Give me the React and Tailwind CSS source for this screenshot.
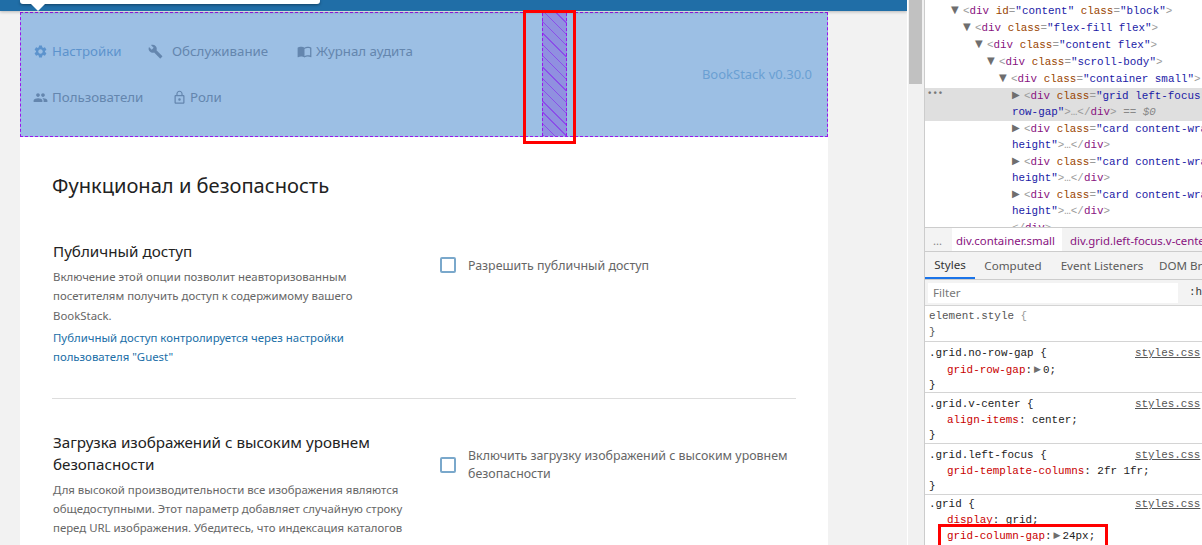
import React from "react";
import { MdSettings, MdBuild, MdImportContacts, MdPeople, MdLockOutline } from "react-icons/md";

const NavItem = ({ icon: Icon, label, w, gap, tone }) => (
  <div className={`flex items-center ${w} ${gap} ${tone} py-[13.5px] leading-[19px]`}>
    <Icon className="w-[15px] h-[15px] shrink-0" />
    <span>{label}</span>
  </div>
);

const T = ({ children }) => <span className="text-[#881280]">{children}</span>;
const A = ({ children }) => <span className="text-[#994500]">{children}</span>;
const V = ({ children }) => <span className="text-[#1a1aa6]">{children}</span>;
const P = ({ children }) => <span className="text-[#9a9a9a]">{children}</span>;
const Arrow = ({ open }) => (
  <span className="inline-block w-[12px] text-[#6e6e6e] text-[10px] leading-none align-[1px]" style={{ fontFamily: '"DejaVu Sans", sans-serif' }}>{open ? "▼" : "▶"}</span>
);

const DomLine = ({ pad, open, tag, attrs }) => (
  <div className={`${pad} h-[17px] leading-[17px] whitespace-nowrap`}>
    <Arrow open={open} />
    <P>&lt;</P><T>{tag}</T>
    {attrs.map(([k, v]) => (
      <span key={k}> <A>{k}</A><P>=</P><V>"{v}"</V></span>
    ))}
    <P>&gt;</P>
  </div>
);

const CardLine = () => (
  <div className="h-[33px]">
    <div className="pl-[87px] whitespace-nowrap leading-[16px]">
      <Arrow /><P>&lt;</P><T>div</T> <A>class</A><P>=</P><V>"card content-wra</V>
    </div>
    <div className="pl-[87px] whitespace-nowrap leading-[17px]">
      <V>height"</V><P>&gt;…&lt;/</P><T>div</T><P>&gt;</P>
    </div>
  </div>
);

const Rule = ({ sel, children }) => (
  <div className="border-b border-[#d4d4d4] pl-[4px] pr-0 pt-[3px] leading-[16px] h-[51px] whitespace-nowrap overflow-hidden flex flex-col">
    <div className="flex justify-between">
      <span><span className="text-[#222]">{sel}</span> <span className="text-[#222]">{"{"}</span></span>
      <span className="underline text-[#555] w-[67px] overflow-hidden shrink-0">styles.css</span>
    </div>
    <div className="pl-[18px]">{children}</div>
    <div className="text-[#222] -mt-[1px]">{"}"}</div>
  </div>
);

const Decl = ({ k, v, arrow }) => (
  <span>
    <span className="text-[#c80000]">{k}</span>
    <span className="text-[#222]">:</span>
    {arrow ? <span className="text-[#6e6e6e] text-[9px] mx-[2px] align-[1px]" style={{ fontFamily: '"DejaVu Sans", sans-serif' }}>▶</span> : " "}
    <span className="text-[#222]">{v}</span>
    <span className="text-[#222]">;</span>
  </span>
);

export default function App() {
  return (
    <div className="relative w-[1202px] h-[545px] overflow-hidden flex bg-white" style={{ fontFamily: '"Noto Sans", sans-serif' }}>
      {/* Page */}
      <div className="w-[907px] h-[545px] overflow-hidden bg-[#f2f2f2] shrink-0">
        <div className="relative h-[11px] bg-[#206ea7] shadow-[0_1px_3px_rgba(0,0,0,0.25)] z-10">
          <div className="absolute left-[20px] top-0 w-[300px] h-[4px] bg-white rounded-b-[3px] shadow-[0_1px_3px_rgba(0,0,0,0.4)]" />
          <div className="absolute left-[31px] top-[4px] w-0 h-0 border-l-[7px] border-r-[7px] border-t-[7px] border-l-transparent border-r-transparent border-t-white" />
        </div>
        <div className="ml-[20px] w-[808px] bg-white pt-px">
          <div className="grid grid-cols-[521px_25px_1fr] h-[125px] bg-[#9cbfe4] border border-dashed border-[#9a14ee] text-[13.3px]">
            <div className="pl-[12px] py-[15px]">
              <div className="flex">
                <NavItem icon={MdSettings} label="Настройки" w="w-[115px]" gap="gap-[4px]" tone="text-[#5c93cd]" />
                <NavItem icon={MdBuild} label="Обслуживание" w="w-[149px]" gap="gap-[9px]" tone="text-[#6486ae]" />
                <NavItem icon={MdImportContacts} label="Журнал аудита" w="w-[160px]" gap="gap-[4px]" tone="text-[#6486ae]" />
              </div>
              <div className="flex">
                <NavItem icon={MdPeople} label="Пользователи" w="w-[139px]" gap="gap-[4px]" tone="text-[#6486ae]" />
                <NavItem icon={MdLockOutline} label="Роли" w="w-[80px]" gap="gap-[3px]" tone="text-[#6486ae]" />
              </div>
            </div>
            <div className="border-x border-dashed border-[#9a14ee] bg-[#9090e0] bg-[repeating-linear-gradient(45deg,#8a50e8_0,#8a50e8_1px,transparent_1px,transparent_8px)]" />
            <div className="flex items-center justify-end pr-[15px] text-[#6a9fd3] text-[13px]">BookStack v0.30.0</div>
          </div>
          <div className="px-[32px] pt-[35px] h-[409px] overflow-hidden">
            <h2 className="text-[20.1px] leading-[28px] text-[#222] font-normal">Функционал и безопасность</h2>
            <div className="grid grid-cols-2 gap-x-8 mt-[40px] border-b border-[#ddd] h-[159px]">
              <div className="pl-px">
                <div className="text-[15.2px] leading-[22px] text-[#222]">Публичный доступ</div>
                <p className="text-[11.4px] leading-[19.3px] text-[#666] mt-[5px] whitespace-nowrap">
                  Включение этой опции позволит неавторизованным<br />
                  посетителям получить доступ к содержимому вашего<br />
                  BookStack.
                </p>
                <p className="text-[11.4px] leading-[19.3px] text-[#206ea7] mt-[3px] whitespace-nowrap">
                  Публичный доступ контролируется через настройки<br />
                  пользователя "Guest"
                </p>
              </div>
              <label className="flex items-start gap-[12px] text-[12.4px] leading-[19px] text-[#666] pt-[17px]">
                <span className="w-[16px] h-[16px] border-2 border-[#7aa8cb] rounded-[2px] shrink-0 bg-white" />
                <span className="-mt-[1px]">Разрешить публичный доступ</span>
              </label>
            </div>
            <div className="grid grid-cols-2 gap-x-8 pt-[32px]">
              <div className="pl-px">
                <div className="text-[15.2px] leading-[22px] text-[#222] whitespace-nowrap">
                  Загрузка изображений с высоким уровнем<br />безопасности
                </div>
                <p className="text-[11.4px] leading-[19px] text-[#666] mt-[5px] whitespace-nowrap">
                  Для высокой производительности все изображения являются<br />
                  общедоступными. Этот параметр добавляет случайную строку<br />
                  перед URL изображения. Убедитесь, что индексация каталогов
                </p>
              </div>
              <label className="flex items-start gap-[12px] text-[12.4px] leading-[18px] text-[#666] pt-[26px]">
                <span className="w-[16px] h-[16px] border-2 border-[#7aa8cb] rounded-[2px] shrink-0 bg-white" />
                <span className="-mt-[10px] whitespace-nowrap">
                  Включить загрузку изображений с высоким уровнем<br />безопасности
                </span>
              </label>
            </div>
          </div>
        </div>
      </div>
      {/* Scrollbar */}
      <div className="w-[17px] h-[545px] bg-[#f1f1f1] pl-[1px] shrink-0 border-l border-white">
        <div className="w-[13px] h-[84px] bg-[#c1c1c1]" />
      </div>
      {/* DevTools */}
      <div className="relative flex-1 h-[545px] overflow-hidden border-l border-[#ccc] bg-white text-[10.9px]" style={{ fontFamily: '"Liberation Mono", monospace' }}>
        <div className="h-[228px] overflow-hidden pt-[3px] border-b border-[#ccc]">
          <DomLine pad="pl-[26px]" open tag="div" attrs={[["id", "content"], ["class", "block"]]} />
          <DomLine pad="pl-[38px]" open tag="div" attrs={[["class", "flex-fill flex"]]} />
          <DomLine pad="pl-[50px]" open tag="div" attrs={[["class", "content flex"]]} />
          <DomLine pad="pl-[62px]" open tag="div" attrs={[["class", "scroll-body"]]} />
          <DomLine pad="pl-[74px]" open tag="div" attrs={[["class", "container small"]]} />
          <div className="relative h-[33px] bg-[#dfdfdf]">
            <span className="absolute left-[2px] top-0 text-[#777] font-bold text-[9px]">•••</span>
            <div className="pl-[87px] whitespace-nowrap leading-[16px]">
              <Arrow /><P>&lt;</P><T>div</T> <A>class</A><P>=</P><V>"grid left-focus</V>
            </div>
            <div className="pl-[87px] whitespace-nowrap leading-[17px]">
              <V>row-gap"</V><P>&gt;…&lt;/</P><T>div</T><P>&gt;</P> <span className="text-[#888]">== <i>$0</i></span>
            </div>
          </div>
          <CardLine />
          <CardLine />
          <CardLine />
          <div className="pl-[87px] leading-[16px]"><P>&lt;/</P><T>div</T><P>&gt;</P></div>
        </div>
        <div className="h-[24px] flex items-stretch border-b border-[#ccc] bg-[#f3f3f3] whitespace-nowrap text-[11.4px]" style={{ fontFamily: '"Noto Sans", sans-serif' }}>
          <span className="w-[27px] shrink-0 pl-[8px] pt-[2px] flex items-center text-[#888]">…</span>
          <span className="shrink-0 flex items-center pt-[2px] bg-white pl-[4px] pr-[7px] text-[#881280]">div.container.small</span>
          <span className="pl-[8px] pt-[2px] flex items-center shrink-0 text-[#881280]">div.grid.left-focus.v-center</span>
        </div>
        <div className="h-[28px] flex items-stretch border-b border-[#ccc] bg-[#f3f3f3] whitespace-nowrap text-[11.6px] text-[#5a5a5a]" style={{ fontFamily: '"Noto Sans", sans-serif' }}>
          <span className="w-[50px] shrink-0 flex items-center justify-center border-b-2 border-[#1a73e8] text-[#333]">Styles</span>
          <span className="w-[76px] shrink-0 flex items-center justify-center">Computed</span>
          <span className="w-[102px] shrink-0 flex items-center justify-center">Event Listeners</span>
          <span className="pl-[6px] shrink-0 flex items-center">DOM Breakpoints</span>
        </div>
        <div className="h-[26px] flex items-center bg-[#f3f3f3] border-b border-[#d4d4d4] pl-[3px]">
          <div className="w-[253px] h-[20px] bg-white pl-[5px] text-[11.6px] leading-[20px] text-[#777]" style={{ fontFamily: '"Noto Sans", sans-serif' }}>Filter</div>
          <span className="ml-[11px] text-[#333]">:h</span>
        </div>
        <div className="border-b border-[#d4d4d4] pl-[4px] pt-[2px] leading-[16px] h-[36px] text-[#555]">
          <div>element.style <span className="text-[#999]">{"{"}</span></div>
          <div className="text-[#555]">{"}"}</div>
        </div>
        <Rule sel=".grid.no-row-gap"><Decl k="grid-row-gap" v="0" arrow /></Rule>
        <Rule sel=".grid.v-center"><Decl k="align-items" v="center" /></Rule>
        <Rule sel=".grid.left-focus"><Decl k="grid-template-columns" v="2fr 1fr" /></Rule>
        <div className="pl-[4px] pt-[2px] leading-[15.5px] whitespace-nowrap">
          <div className="flex justify-between">
            <span className="text-[#222]">.grid {"{"}</span>
            <span className="underline text-[#555] w-[67px] overflow-hidden shrink-0">styles.css</span>
          </div>
          <div className="pl-[18px]"><Decl k="display" v="grid" /></div>
          <div className="pl-[18px]"><Decl k="grid-column-gap" v="24px" arrow /></div>
        </div>
        <div className="absolute left-[13px] top-[524px] w-[170px] h-[30px] border-[3px] border-[#f00]" />
      </div>
      {/* Red highlight over the grid gap */}
      <div className="absolute left-[523px] top-[10px] w-[53px] h-[134px] border-[3px] border-[#f00] z-20" />
    </div>
  );
}
